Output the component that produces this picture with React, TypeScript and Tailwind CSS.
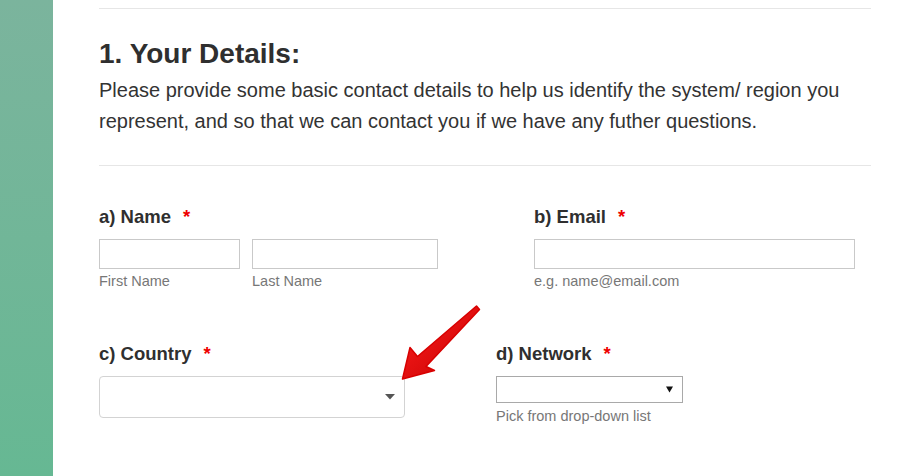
import React from "react";

const Req = () => (
  <span className="ml-[12px] text-[#ee0000] font-bold">*</span>
);

export default function App() {
  return (
    <div
      className="relative flex w-[916px] h-[476px] overflow-hidden bg-white"
      style={{ fontFamily: '"Liberation Sans", Arial, sans-serif' }}
    >
      <div className="w-[53px] shrink-0 bg-gradient-to-b from-[#7bb49d] to-[#66b893]" />
      <div className="pl-[46px] pt-[8px] w-[818px]">
        <div className="border-t border-[#e6e6e6]" />
        <h1 className="mt-[30px] text-[28px] leading-[30px] font-bold text-[#2f2f2f]">
          1. Your Details:
        </h1>
        <p className="mt-[6px] text-[20px] leading-[31px] text-[#333]">
          Please provide some basic contact details to help us identify the system/ region you
          <br />
          represent, and so that we can contact you if we have any futher questions.
        </p>
        <div className="mt-[28px] border-t border-[#e6e6e6]" />

        {/* Row 1 */}
        <div className="mt-[40px] flex">
          <div className="w-[435px] shrink-0">
            <div className="text-[18.5px] leading-[22px] font-bold text-[#2f2f2f]">
              a) Name
              <Req />
            </div>
            <div className="mt-[11px] flex gap-[12px]">
              <div>
                <div className="w-[141px] h-[30px] border border-[#c9c9c9] bg-white" />
                <div className="mt-[3px] text-[14.5px] leading-[18px] text-[#777]">First Name</div>
              </div>
              <div>
                <div className="w-[186px] h-[30px] border border-[#c9c9c9] bg-white" />
                <div className="mt-[3px] text-[14.5px] leading-[18px] text-[#777]">Last Name</div>
              </div>
            </div>
          </div>
          <div>
            <div className="text-[18.5px] leading-[22px] font-bold text-[#2f2f2f]">
              b) Email
              <Req />
            </div>
            <div className="mt-[11px]">
              <div className="w-[321px] h-[30px] border border-[#c9c9c9] bg-white" />
              <div className="mt-[3px] text-[14.5px] leading-[18px] text-[#777]">e.g. name@email.com</div>
            </div>
          </div>
        </div>

        {/* Row 2 */}
        <div className="mt-[53px] flex">
          <div className="w-[397px] shrink-0">
            <div className="text-[18.5px] leading-[22px] font-bold text-[#2f2f2f]">
              c) Country
              <Req />
            </div>
            <div className="mt-[11px] w-[306px] h-[42px] rounded-[4px] border border-[#d3d3d3] bg-white flex items-center justify-end pr-[9px]">
              <svg width="10" height="6" viewBox="0 0 10 6">
                <polygon points="0,0 10,0 5,5.5" fill="#555" />
              </svg>
            </div>
          </div>
          <div>
            <div className="text-[18.5px] leading-[22px] font-bold text-[#2f2f2f]">
              d) Network
              <Req />
            </div>
            <div className="mt-[11px] w-[187px] h-[27px] border border-[#a9a9a9] bg-white flex items-center justify-end pr-[9px]">
              <svg width="7" height="7" viewBox="0 0 7 7">
                <polygon points="0,0.5 7,0.5 3.5,6.5" fill="#111" />
              </svg>
            </div>
            <div className="mt-[4px] text-[14.5px] leading-[18px] text-[#777]">Pick from drop-down list</div>
          </div>
        </div>
      </div>

      {/* red arrow overlay */}
      <svg
        className="absolute left-0 top-0 pointer-events-none"
        width="916"
        height="476"
        viewBox="0 0 916 476"
      >
        <defs>
          <linearGradient id="ar" x1="0" y1="0" x2="1" y2="1">
            <stop offset="0" stopColor="#ff1f1f" />
            <stop offset="1" stopColor="#c40000" />
          </linearGradient>
        </defs>
        <polygon
          points="402.5,379 410,347.5 417.5,356.5 476.5,306 479.5,309.5 426,366.5 434.5,370.5"
          fill="url(#ar)"
          stroke="#d80000"
          strokeWidth="1.5"
          strokeLinejoin="round"
        />
      </svg>
    </div>
  );
}
